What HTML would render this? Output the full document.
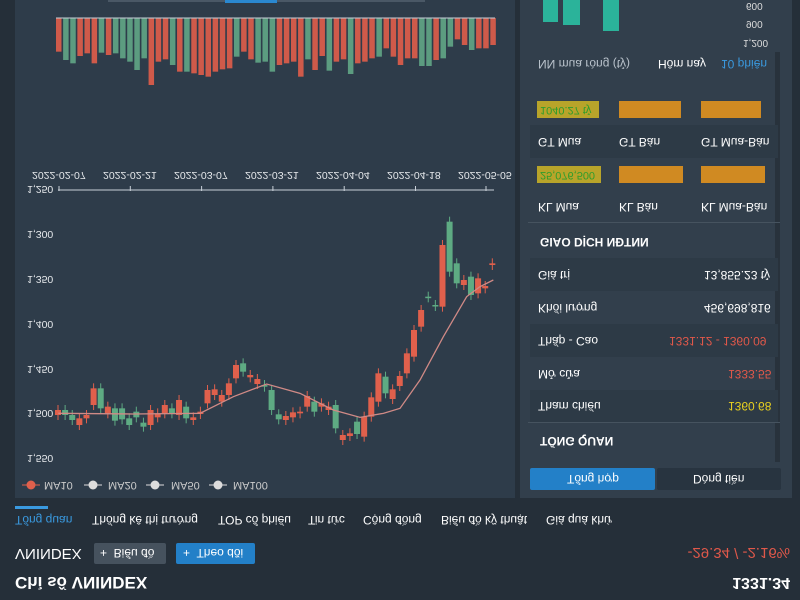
<!DOCTYPE html>
<html><head><meta charset="utf-8"><style>
body{margin:0;width:800px;height:600px;overflow:hidden;background:#252f39;font-family:"Liberation Sans","Noto Sans CJK SC",sans-serif;color:#e6e9ec;position:relative}
.a{position:absolute}
.f{position:absolute;transform:scaleY(-1);white-space:nowrap;line-height:1}
.row{position:absolute;left:530px;width:248px;height:33px}
</style></head><body>
<div class="a" style="left:15px;top:0;width:500px;height:498px;background:#2e3c4a"></div>
<div class="a" style="left:520px;top:0;width:272px;height:498px;background:#323f4c"></div>
<div class="a" style="left:108px;top:0;width:317px;height:2px;background:#4a5866"></div>
<div class="a" style="left:225px;top:0;width:52px;height:3px;background:#2a88d0"></div>
<svg class="a" style="left:0;top:0" width="520" height="498" id="ch"></svg>
<div class="f" style="left:44px;top:479px;font-size:11px;color:#ccc">MA10</div>
<div class="f" style="left:108px;top:479px;font-size:11px;color:#ccc">MA20</div>
<div class="f" style="left:171px;top:479px;font-size:11px;color:#ccc">MA50</div>
<div class="f" style="left:233px;top:479px;font-size:11px;color:#ccc">MA100</div>
<div class="a" style="left:543px;top:0;width:15px;height:22px;background:#2bb39a"></div>
<div class="a" style="left:563px;top:0;width:17px;height:25px;background:#2bb39a"></div>
<div class="a" style="left:603px;top:0;width:16px;height:31px;background:#2bb39a"></div>
<div class="f" style="left:746px;top:0px;font-size:10px;color:#ddd">600</div>
<div class="f" style="left:746px;top:18px;font-size:10px;color:#ddd">900</div>
<div class="f" style="left:743px;top:37px;font-size:10px;color:#ddd">1,200</div>
<div class="a" style="left:775px;top:52px;width:5px;height:410px;background:#28323c"></div>
<div class="f" style="left:538px;top:58px;font-size:12px;color:#b9c2cb">NN mua ròng (tỷ)</div>
<div class="f" style="left:658px;top:58px;font-size:12px;color:#fff">Hôm nay</div>
<div class="f" style="left:721px;top:58px;font-size:12px;color:#3a9ae0">10 phiên</div>
<div class="a" style="left:537px;top:101px;width:62px;height:17px;background:#b8a42a"></div>
<div class="f" style="left:540px;top:104px;font-size:11px;color:#2f9d2c">1040.27 tỷ</div>
<div class="a" style="left:619px;top:101px;width:62px;height:17px;background:#d08a22"></div>
<div class="a" style="left:701px;top:101px;width:60px;height:17px;background:#d08a22"></div>
<div class="row" style="top:125px;background:#2d3a46"></div>
<div class="f" style="left:538px;top:136px;font-size:12px;color:#fff">GT Mua</div>
<div class="f" style="left:619px;top:136px;font-size:12px;color:#fff">GT Bán</div>
<div class="f" style="left:701px;top:136px;font-size:12px;color:#fff">GT Mua-Bán</div>
<div class="a" style="left:537px;top:166px;width:64px;height:17px;background:#b8a42a"></div>
<div class="f" style="left:540px;top:169px;font-size:11px;color:#2f9d2c">25,076,500</div>
<div class="a" style="left:619px;top:166px;width:64px;height:17px;background:#d08a22"></div>
<div class="a" style="left:701px;top:166px;width:64px;height:17px;background:#d08a22"></div>
<div class="f" style="left:538px;top:201px;font-size:12px;color:#fff">KL Mua</div>
<div class="f" style="left:619px;top:201px;font-size:12px;color:#fff">KL Bán</div>
<div class="f" style="left:701px;top:201px;font-size:12px;color:#fff">KL Mua-Bán</div>
<div class="a" style="left:528px;top:222px;width:252px;height:1px;background:#46535f"></div>
<div class="f" style="left:540px;top:236px;font-size:12px;font-weight:bold;color:#fff">GIAO DỊCH NĐTNN</div>
<div class="row" style="top:258px;background:#2d3a46"></div>
<div class="f" style="left:538px;top:269px;font-size:12px;color:#fff">Giá trị</div>
<div class="f" style="left:704px;top:269px;font-size:12px;color:#fff">13,855.23 tỷ</div>
<div class="f" style="left:538px;top:302px;font-size:12px;color:#fff">Khối lượng</div>
<div class="f" style="left:704px;top:302px;font-size:12px;color:#fff">456,698,816</div>
<div class="row" style="top:324px;background:#2d3a46"></div>
<div class="f" style="left:538px;top:335px;font-size:12px;color:#fff">Thấp - Cao</div>
<div class="f" style="left:669px;top:335px;font-size:12px;color:#e0584a">1331.12 - 1360.09</div>
<div class="f" style="left:538px;top:368px;font-size:12px;color:#fff">Mở cửa</div>
<div class="f" style="left:728px;top:368px;font-size:12px;color:#e0584a">1333.55</div>
<div class="row" style="top:390px;background:#2d3a46"></div>
<div class="f" style="left:538px;top:400px;font-size:12px;color:#fff">Tham chiếu</div>
<div class="f" style="left:728px;top:400px;font-size:12px;color:#e8d020">1360.68</div>
<div class="a" style="left:528px;top:422px;width:252px;height:1px;background:#46535f"></div>
<div class="f" style="left:540px;top:435px;font-size:12px;font-weight:bold;color:#fff">TỔNG QUAN</div>
<div class="a" style="left:530px;top:468px;width:125px;height:22px;background:#2380c8;border-radius:2px"></div>
<div class="a" style="left:657px;top:468px;width:124px;height:22px;background:#283440;border-radius:2px"></div>
<div class="f" style="left:567px;top:473px;font-size:12px;color:#fff">Tổng hợp</div>
<div class="f" style="left:693px;top:473px;font-size:12px;color:#fff">Dòng tiền</div>
<div class="a" style="left:15px;top:506px;width:33px;height:3px;background:#3a9ae0"></div>
<div class="f" style="left:15px;top:514px;font-size:12px;color:#3a9ae0">Tổng quan</div>
<div class="f" style="left:92px;top:514px;font-size:12px;color:#fff">Thống kê thị trường</div>
<div class="f" style="left:218px;top:514px;font-size:12px;color:#fff">TOP cổ phiếu</div>
<div class="f" style="left:308px;top:514px;font-size:12px;color:#fff">Tin tức</div>
<div class="f" style="left:363px;top:514px;font-size:12px;color:#fff">Cộng đồng</div>
<div class="f" style="left:441px;top:514px;font-size:12px;color:#fff">Biểu đồ kỹ thuật</div>
<div class="f" style="left:546px;top:514px;font-size:12px;color:#fff">Giá quá khứ</div>
<div class="f" style="left:15px;top:546px;font-size:15px;color:#fff">VNINDEX</div>
<div class="a" style="left:94px;top:543px;width:72px;height:21px;background:#46525e;border-radius:2px"></div>
<div class="f" style="left:100px;top:547px;font-size:12px;color:#fff">+&nbsp; Biểu đồ</div>
<div class="a" style="left:176px;top:543px;width:79px;height:21px;background:#2380c8;border-radius:2px"></div>
<div class="f" style="left:183px;top:547px;font-size:12px;color:#fff">+&nbsp; Theo dõi</div>
<div class="f" style="right:10px;top:545px;font-size:15px;color:#e0584a">-29.34 / -2.16%</div>
<div class="f" style="left:15px;top:574px;font-size:17px;font-weight:bold;color:#fff">Chỉ số VNINDEX</div>
<div class="f" style="right:10px;top:574px;font-size:16px;font-weight:bold;color:#fff">1331.34</div>
<script>
var s=document.getElementById('ch'),h='';
var R='#e0604c',G='#5eab83';
var vb="r155 g180 g190 r168 r160 r190 g158 r165 g160 g175 g185 g210 g175 r255 r185 r178 g195 r215 g215 r220 r225 r230 r215 r208 r205 g170 r155 r178 g188 g185 g215 r195 r190 r185 r230 g178 r210 r168 g212 r185 r178 g222 r190 r185 r175 g170 r145 r170 r195 r175 r175 g198 g198 r180 g175 g140 r118 r135 g150 r145 r145 r135".split(' ');
vb.forEach(function(v,i){var x=56+i*7.12;var b=v.slice(1)/3;h+='<rect x="'+x+'" y="18" width="5.5" height="'+(b-18)+'" fill="'+(v[0]=='r'?'#cf5a4a':'#5c9c80')+'"/>';});
h+='<line x1="56" y1="18" x2="495" y2="18" stroke="#c8d0d8" stroke-width="1"/>';
h+='<line x1="58" y1="190" x2="494" y2="190" stroke="#c8d0d8"/>';
var d=['2022-02-07','2022-02-21','2022-03-07','2022-03-21','2022-04-04','2022-04-18','2022-05-05'];
d.forEach(function(t,i){var x=59+i*71.3;if(i==6)x=486;h+='<line x1="'+x+'" y1="186" x2="'+x+'" y2="191" stroke="#c8d0d8"/>';h+='<text transform="translate('+(32+i*71)+',172) scale(1,-1)" font-size="10.5" fill="#e6e9ec" font-family="Liberation Sans">'+t+'</text>';});
var yl=[['1,250',190],['1,300',235],['1,350',280],['1,400',325],['1,450',370],['1,500',414],['1,550',459]];
yl.forEach(function(a){h+='<text transform="translate(27,'+(a[1]-4)+') scale(1,-1)" font-size="10.5" fill="#e6e9ec" font-family="Liberation Sans">'+a[0]+'</text>';});
var c=[[690,705,'r'],[690,705,'g'],[705,720,'g'],[715,735,'r'],[705,715,'r'],[625,675,'r'],[625,685,'g'],[680,700,'r'],[685,722,'g'],[685,718,'g'],[715,735,'g'],[695,712,'g'],[728,740,'g'],[690,735,'r'],[700,712,'r'],[675,700,'r'],[685,700,'g'],[660,705,'r'],[680,715,'g'],[712,720,'r'],[695,702,'r'],[630,670,'r'],[628,645,'r'],[645,665,'r'],[610,645,'r'],[555,595,'r'],[550,575,'g'],[585,592,'r'],[597,612,'r'],[615,620,'g'],[630,690,'g'],[703,718,'g'],[708,720,'r'],[697,712,'r'],[695,700,'r'],[648,680,'r'],[665,695,'g'],[670,680,'r'],[680,690,'r'],[675,745,'g'],[765,780,'r'],[760,768,'r'],[725,762,'g'],[710,770,'r'],[652,710,'r'],[580,665,'r'],[590,640,'g'],[628,657,'r'],[588,618,'r'],[520,580,'r'],[450,530,'r'],[390,440,'r'],[350,352,'g'],[375,378,'g'],[195,380,'r'],[125,275,'g'],[250,310,'g'],[300,315,'r'],[290,345,'g'],[295,340,'r'],[318,325,'r'],[250,255,'r']];
c.forEach(function(k,i){var x=58+i*7.12;var t=180+k[0]/3,b=180+k[1]/3;var col=k[2]=='r'?R:G;h+='<line x1="'+x+'" y1="'+(t-5)+'" x2="'+x+'" y2="'+(b+5)+'" stroke="'+col+'"/><rect x="'+(x-3)+'" y="'+t+'" width="6" height="'+Math.max(1.5,b-t)+'" fill="'+col+'"/>';});
var m=[[175,700],[400,702],[600,700],[700,650],[800,612],[900,640],[1000,690],[1080,712],[1150,700],[1200,685],[1260,600],[1330,470],[1400,350],[1440,320],[1480,300]];
h+='<polyline fill="none" stroke="#d08a86" stroke-width="1.3" points="'+m.map(function(p){return p[0]/3+','+(180+p[1]/3)}).join(' ')+'"/>';
[[31,R],[93,'#ddd'],[155,'#ddd'],[218,'#ddd']].forEach(function(l){h+='<line x1="'+(l[0]-9)+'" y1="485" x2="'+(l[0]+9)+'" y2="485" stroke="'+l[1]+'"/><circle cx="'+l[0]+'" cy="485" r="4.5" fill="'+l[1]+'"/>';});
s.innerHTML=h;
</script>
</body></html>
